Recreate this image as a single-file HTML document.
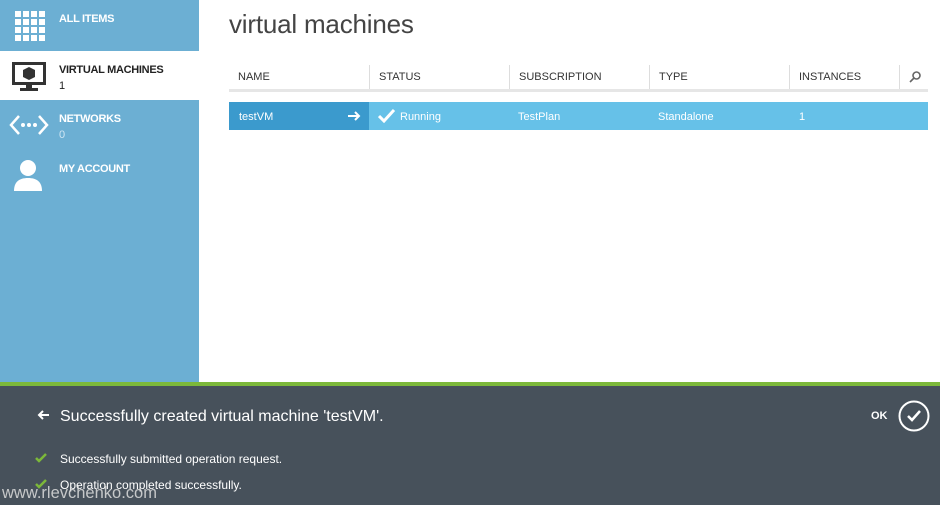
<!DOCTYPE html>
<html><head><style>
*{margin:0;padding:0;box-sizing:border-box}
body{width:940px;height:505px;overflow:hidden;background:#fff;font-family:"Liberation Sans",sans-serif;position:relative}
.side{position:absolute;left:0;top:0;width:199px;height:382px;background:#6cafd3}
.item{position:absolute;left:0;width:199px;height:50px;color:#fff}
.item b{position:absolute;left:59px;top:13px;font-size:11px;letter-spacing:-0.3px}
.item span{position:absolute;left:59px;top:29px;font-size:11px}
.sel{background:#fff;color:#222}
h1{position:absolute;left:229px;top:9px;font-weight:normal;font-size:26px;color:#444;letter-spacing:-0.2px}
.hd{position:absolute;top:65px;height:24px;font-size:11px;color:#333;border-left:1px solid #ddd;padding:6px 0 0 9px}
.rule{position:absolute;left:229px;top:89px;width:699px;height:3px;background:#e6e6e6}
.row{position:absolute;left:229px;top:102px;width:699px;height:28px;background:#66c1e8;font-size:11px;color:#fff}
.row div{position:absolute;top:9px}
.bot{position:absolute;left:0;top:382px;width:940px;height:123px;background:#47515b;border-top:4px solid #7cb83a;color:#fff}
</style></head><body>
<div class="side">
 <div class="item" style="top:0"><svg style="position:absolute;left:15px;top:11px" width="30" height="30" viewBox="0 0 30 30" fill="#fff"><g id="r"><rect x="0" y="0" width="6" height="6"/><rect x="8" y="0" width="6" height="6"/><rect x="16" y="0" width="6" height="6"/><rect x="24" y="0" width="6" height="6"/></g><use href="#r" y="8"/><use href="#r" y="16"/><use href="#r" y="24"/></svg><b style="top:13px">ALL ITEMS</b></div>
 <div class="item sel" style="top:51px;height:49px"><svg style="position:absolute;left:12px;top:11px" width="34" height="30" viewBox="0 0 34 30"><rect x="1.5" y="1.5" width="31" height="20" fill="none" stroke="#333" stroke-width="3"/><path d="M17 5l6 3v7l-6 3-6-3V8z" fill="#333"/><rect x="14" y="22" width="6" height="4" fill="#333"/><rect x="8" y="26" width="18" height="3" fill="#333"/></svg><b>VIRTUAL MACHINES</b><span>1</span></div>
 <div class="item" style="top:100px"><svg style="position:absolute;left:9px;top:14px" width="40" height="22" viewBox="0 0 40 22" fill="none" stroke="#fff" stroke-width="2.5"><path d="M10 2L2 11l8 9M30 2l8 9-8 9"/><g fill="#fff" stroke="none"><circle cx="14" cy="11" r="2"/><circle cx="20" cy="11" r="2"/><circle cx="26" cy="11" r="2"/></g></svg><b>NETWORKS</b><span style="color:#cfe6f3">0</span></div>
 <div class="item" style="top:150px"><svg style="position:absolute;left:14px;top:10px" width="28" height="32" viewBox="0 0 28 32" fill="#fff"><circle cx="14" cy="8" r="8"/><path d="M0 31c0-9 5-13 14-13s14 4 14 13z"/></svg><b>MY ACCOUNT</b></div>
</div>
<h1>virtual machines</h1>
<div class="hd" style="left:229px;border:none">NAME</div>
<div class="hd" style="left:369px">STATUS</div>
<div class="hd" style="left:509px">SUBSCRIPTION</div>
<div class="hd" style="left:649px">TYPE</div>
<div class="hd" style="left:789px">INSTANCES</div>
<div class="hd" style="left:899px;width:29px"><svg width="12" height="12" viewBox="0 0 12 12" fill="none" stroke="#666" stroke-width="1.6"><circle cx="7.5" cy="4.5" r="3.5"/><path d="M5 7L1 11"/></svg></div>
<div class="rule"></div>
<div class="row"><div style="left:0;top:0;width:140px;height:28px;background:#3b9acd"></div><div style="left:10px">testVM</div>
<svg style="position:absolute;left:119px;top:9px" width="13" height="10" viewBox="0 0 13 10"><path d="M0 5h11M7 1l4 4-4 4" fill="none" stroke="#fff" stroke-width="2"/></svg>
<svg style="position:absolute;left:149px;top:7px" width="17" height="14" viewBox="0 0 17 14"><path d="M1 7l5 5L16 1" fill="none" stroke="#fff" stroke-width="3"/></svg>
<div style="left:171px">Running</div><div style="left:289px">TestPlan</div><div style="left:429px">Standalone</div><div style="left:570px">1</div></div>
<div class="bot">
 <svg style="position:absolute;left:37px;top:24px" width="12" height="10" viewBox="0 0 12 10"><path d="M12 5H2M6 1L2 5l4 4" fill="none" stroke="#fff" stroke-width="2"/></svg>
 <div style="position:absolute;left:60px;top:22px;font-size:16px">Successfully created virtual machine 'testVM'.</div>
 <div style="position:absolute;left:871px;top:24px;font-size:11px;font-weight:bold">OK</div>
 <svg style="position:absolute;left:898px;top:14px" width="32" height="32" viewBox="0 0 32 32" fill="none" stroke="#fff" stroke-width="2"><circle cx="16" cy="16" r="14.5"/><path d="M10 16l4 4 8-9" stroke-width="2.5"/></svg>
 <svg style="position:absolute;left:35px;top:67px" width="12" height="10" viewBox="0 0 12 10"><path d="M1 5l3 3 7-7" fill="none" stroke="#7cb83a" stroke-width="2.5"/></svg>
 <div style="position:absolute;left:60px;top:66px;font-size:12px">Successfully submitted operation request.</div>
 <svg style="position:absolute;left:35px;top:93px" width="12" height="10" viewBox="0 0 12 10"><path d="M1 5l3 3 7-7" fill="none" stroke="#7cb83a" stroke-width="2.5"/></svg>
 <div style="position:absolute;left:60px;top:92px;font-size:12px">Operation completed successfully.</div>
 <div style="position:absolute;left:2px;top:98px;font-size:16.5px;color:#ddd;opacity:.85">www.rlevchenko.com</div>
</div>
</body></html>
